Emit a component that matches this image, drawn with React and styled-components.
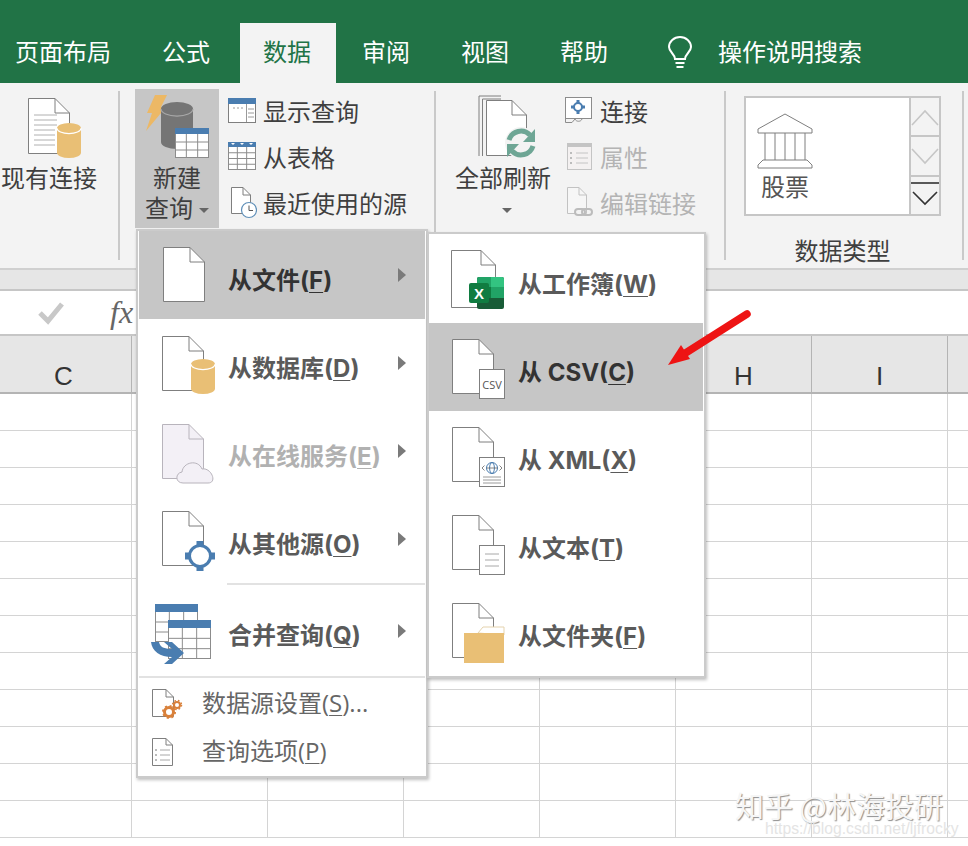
import React from 'react'
import styled, { createGlobalStyle } from 'styled-components'

const GlobalStyle = createGlobalStyle`
    html, body {
        margin: 0;
        padding: 0;
        background: #fff;
    }
    * {
        box-sizing: border-box;
    }
`;

const Page = styled.div`
    position: relative;
    width: 968px;
    height: 846px;
    overflow: hidden;
    font-family: "Open Sans", "Noto Sans CJK SC", sans-serif;
    color: #444;
`;

const TabBar = styled.div`
    display: flex;
    align-items: stretch;
    gap: 3px;
    height: 83px;
    padding: 23px 0 0 0;
    margin-left: -9px;
    background: #217346;
`;

const Tab = styled.div`
    display: flex;
    align-items: center;
    justify-content: center;
    padding: ${p => (p.$active ? '0 25px 6px 23px' : '0 24px 6px')};
    margin: ${p => (p.$active ? '0 -1px 0 3px' : '0')};
    font-size: 24px;
    color: ${p => (p.$active ? '#217346' : '#fff')};
    background: ${p => (p.$active ? '#f3f3f3' : 'transparent')};
`;

const SearchHint = styled.div`
    display: flex;
    align-items: center;
    gap: 24px;
    margin-left: 31px;
    padding-bottom: 6px;
    font-size: 24px;
    color: #fff;
    & svg {
        margin-top: 6px;
    }
`;

const Ribbon = styled.div`
    display: flex;
    align-items: flex-start;
    height: 185px;
    background: #f3f3f3;
`;

const RibbonGroup = styled.div`
    display: flex;
    flex: none;
    align-items: flex-start;
    width: ${p => p.$width}px;
    padding-left: ${p => p.$pad}px;
    gap: 8px;
`;

const Divider = styled.div`
    flex: none;
    width: 2px;
    height: 169px;
    margin-top: 8px;
    background: #c9c9c9;
`;

const LargeButton = styled.div`
    display: flex;
    flex-direction: column;
    align-items: center;
    width: ${p => p.$width}px;
    height: 139px;
    margin-top: 6px;
    padding-top: 2px;
    font-size: 24px;
    line-height: 30px;
    text-align: center;
    white-space: nowrap;
    color: #3f3f3f;
    background: ${p => (p.$pressed ? '#c6c6c6' : 'transparent')};
`;

const Caret = styled.span`
    display: inline-block;
    width: 0;
    height: 0;
    margin-left: ${p => p.$left || 0}px;
    vertical-align: middle;
    border-left: 5px solid transparent;
    border-right: 5px solid transparent;
    border-top: 5px solid #666;
`;

const SmallList = styled.div`
    display: flex;
    flex-direction: column;
    margin-top: 4px;
    margin-left: ${p => p.$left || 0}px;
`;

const SmallItem = styled.div`
    display: flex;
    align-items: center;
    gap: 6px;
    height: 46px;
    font-size: 24px;
    white-space: nowrap;
    color: ${p => (p.$disabled ? '#b4b4b4' : '#3f3f3f')};
`;

const TypeColumn = styled.div`
    display: flex;
    flex: none;
    flex-direction: column;
    align-items: center;
    width: 197px;
`;

const Gallery = styled.div`
    display: flex;
    width: 197px;
    height: 120px;
    margin-top: 13px;
    background: #fff;
    border: 2px solid #c6c6c6;
`;

const GalleryItem = styled.div`
    display: flex;
    flex: none;
    flex-direction: column;
    align-items: center;
    width: 163px;
    padding: 15px 85px 0 0;
    font-size: 24px;
    line-height: 30px;
    color: #555;
`;

const GalleryLabel = styled.span`
    margin-top: 3px;
`;

const GalleryScroll = styled.div`
    display: flex;
    flex-direction: column;
    flex: none;
    width: 30px;
    background: #f3f3f3;
    border-left: 2px solid #c6c6c6;
`;

const ScrollButton = styled.div`
    display: flex;
    align-items: center;
    justify-content: center;
    flex: 1;
    border-top: ${p => (p.$first ? '0' : '2px solid #c6c6c6')};
`;

const GroupLabel = styled.div`
    margin-top: 18px;
    font-size: 24px;
    line-height: 34px;
    color: #3f3f3f;
`;

const StatusBand = styled.div`
    height: 23px;
    background: #e6e6e6;
    border-top: 2px solid #d0d0d0;
    border-bottom: 2px solid #c6c6c6;
`;

const FormulaBar = styled.div`
    display: flex;
    align-items: center;
    height: 45px;
    padding-left: 36px;
    background: #fff;
    border-bottom: 2px solid #c6c6c6;
`;

const FxMark = styled.span`
    margin-left: 44px;
    font-family: "Liberation Serif", serif;
    font-style: italic;
    font-size: 32px;
    color: #666;
`;

const SheetGrid = styled.div`
    display: grid;
    grid-template-columns: repeat(8, 136px);
    margin-left: -4px;
    width: 1088px;
`;

const ColHead = styled.div`
    display: flex;
    align-items: flex-end;
    justify-content: center;
    height: 58px;
    padding-bottom: 0;
    font-size: 26px;
    font-family: "Liberation Sans", sans-serif;
    color: #333;
    background: #e6e6e6;
    border-right: 1px solid #b4b4b4;
    border-bottom: 2px solid #b4b4b4;
`;

const Cell = styled.div`
    height: 37px;
    border-right: 1px solid #d4d4d4;
    border-bottom: 1px solid #d4d4d4;
`;

const Menu = styled.div`
    position: absolute;
    left: 136px;
    top: 229px;
    width: 292px;
    height: 549px;
    padding: 0 1px;
    background: #fff;
    border: 2px solid #cbcbcb;
    box-shadow: 1px 2px 3px rgba(0, 0, 0, 0.25);
`;

const SubMenu = styled(Menu)`
    left: 427px;
    top: 232px;
    width: 279px;
    height: 446px;
    padding: 1px 1px 1px 0;
`;

const Row = styled.div`
    display: flex;
    align-items: center;
    height: ${p => p.$height || 88}px;
    padding: 0 19px 0 ${p => p.$pad || 9}px;
    font-family: "Inter", "Noto Sans CJK SC", sans-serif;
    font-size: 24px;
    font-weight: 700;
    white-space: nowrap;
    color: ${p => (p.$disabled ? '#b1b1b1' : p.$active ? '#333' : '#5a5a5a')};
    background: ${p => (p.$active ? '#c6c6c6' : 'transparent')};
`;

const RowLabel = styled.span`
    margin-left: ${p => p.$gap || 8}px;
    padding-top: 6px;
    flex: 1;
    & u {
        text-underline-offset: 3px;
        text-decoration-thickness: 1px;
    }
`;

const RowArrow = styled.span`
    flex: none;
    width: 0;
    height: 0;
    border-top: 7px solid transparent;
    border-bottom: 7px solid transparent;
    border-left: 8px solid #7a7a7a;
`;

const ShortRule = styled.div`
    height: 2px;
    margin-left: 88px;
    background: #e2e2e2;
`;

const FullRule = styled.div`
    height: 2px;
    margin-bottom: 2px;
    background: #e2e2e2;
`;

const PlainRow = styled.div`
    display: flex;
    align-items: center;
    gap: 18px;
    height: 48px;
    padding-left: 13px;
    font-size: 24px;
    white-space: nowrap;
    color: #666;
`;

const PlainLabel = styled.span`
    padding-bottom: 6px;
    & u {
        text-underline-offset: 3px;
        text-decoration-thickness: 1px;
    }
`;

const RedArrow = styled.svg`
    position: absolute;
    left: 660px;
    top: 300px;
`;

const Watermark = styled.div`
    position: absolute;
    left: 735px;
    top: 791px;
    font-family: "Noto Sans CJK SC", sans-serif;
    font-size: 29px;
    line-height: 29px;
    white-space: nowrap;
    color: #f6f6f6;
    text-shadow: 1px 1px 1px #8f8f8f;
`;

const WatermarkUrl = styled.div`
    position: absolute;
    left: 765px;
    top: 820px;
    font-family: "Liberation Sans", sans-serif;
    font-size: 15.7px;
    line-height: 17px;
    white-space: nowrap;
    color: #e4e4e4;
`;

const Svg = styled.svg`
    flex: none;
    display: block;
`;

const BLUE = '#4a7db0';
const AMBER = '#e9bf75';
const LINE = '#7f7f7f';

const Doc = ({ x = 15, y = 8, w = 42, h = 55, fold = 15, fill = '#fff', stroke = LINE }) => (
    <>
        <path
            d={`M${x + .5} ${y + .5}H${x + w - fold}L${x + w - .5} ${y + fold}V${y + h - .5}H${x + .5}Z`}
            fill={fill}
            stroke={stroke}
        />
        <path d={`M${x + w - fold} ${y + .5}V${y + fold}H${x + w - .5}`} fill="none" stroke={stroke} />
    </>
);

const Cylinder = ({ x, y, w, h, fill = AMBER, rim = '#fff' }) => {
    const ry = w * 0.22;
    return (
        <>
            <path d={`M${x} ${y + ry}V${y + h - ry}A${w / 2} ${ry} 0 0 0 ${x + w} ${y + h - ry}V${y + ry}A${w / 2} ${ry} 0 0 0 ${x} ${y + ry}Z`} fill={fill} />
            <path d={`M${x} ${y + ry}A${w / 2} ${ry} 0 0 0 ${x + w} ${y + ry}`} fill="none" stroke={rim} strokeWidth="1.2" />
        </>
    );
};

const SheetTable = ({ x, y, w, h, head = 7, cols = 3, rows = 3, color = BLUE, stroke = '#8c8c8c' }) => {
    const lines = [];
    for (let i = 1; i < cols; i++) {
        lines.push(`M${x + (w * i) / cols} ${y + head}V${y + h}`);
    }
    for (let i = 1; i < rows; i++) {
        lines.push(`M${x} ${y + head + ((h - head) * i) / rows}H${x + w}`);
    }
    return (
        <>
            <rect x={x + .5} y={y + .5} width={w - 1} height={h - 1} fill="#fff" stroke={stroke} />
            <path d={lines.join('')} stroke={stroke} strokeWidth="1" fill="none" />
            <rect x={x} y={y} width={w} height={head} fill={color} />
        </>
    );
};

const Icon72 = ({ children }) => (
    <Svg width="72" height="72" viewBox="0 0 72 72">{children}</Svg>
);

const ExistingIcon = () => (
    <Icon72>
        <Doc y={7} h={56} />
        <path d="M21 24H44M21 29H44M21 34H44M21 39H42M21 44H42M21 49H42M21 54H42" stroke="#b0b0b0" />
        <Cylinder x={44} y={32} w={24} h={35} />
    </Icon72>
);

const NewQueryIcon = () => (
    <Icon72>
        <path d="M14 4H26L20 16H25L5 40L11 22H6Z" fill="#ecb865" />
        <Cylinder x={20} y={11} w={32} h={47} fill="#757575" rim="#a8a8a8" />
        <SheetTable x={34} y={37} w={34} h={30} head={6} />
    </Icon72>
);

const RefreshIcon = () => (
    <Icon72>
        <path d="M12 65V5H34M15.5 65V8H34" fill="none" stroke={LINE} />
        <Doc x={19} y={9} w={41} h={56} />
        <circle cx="54" cy="52" r="16" fill="#f3f3f3" />
        <path d="M42 49A12.5 12.5 0 0 1 63 44" fill="none" stroke="#6ea695" strokeWidth="5" />
        <path d="M66 55A12.5 12.5 0 0 1 45 60" fill="none" stroke="#6ea695" strokeWidth="5" />
        <path d="M68 38V51H56Z" fill="#6ea695" />
        <path d="M40 66V53H52Z" fill="#6ea695" />
    </Icon72>
);

const ShowQueryIcon = () => (
    <Svg width="30" height="30" viewBox="0 0 30 30">
        <rect x="1.5" y="3.5" width="27" height="24" fill="#fff" stroke={LINE} />
        <rect x="1" y="3" width="28" height="6" fill={BLUE} />
        <path d="M19.5 9V27M21 14H27M21 18H27M21 22H27" stroke="#9a9a9a" />
        <path d="M6 13H18" stroke="#9a9a9a" strokeDasharray="2 2" />
    </Svg>
);

const FromTableIcon = () => (
    <Svg width="30" height="30" viewBox="0 0 30 30">
        <SheetTable x={1} y={1} w={28} h={28} head={5} rows={4} />
        <path d="M4 2H8L6 4ZM13 2H17L15 4ZM22 2H26L24 4Z" fill="#fff" />
    </Svg>
);

const RecentIcon = () => (
    <Svg width="30" height="34" viewBox="0 0 30 34">
        <Doc x={4} y={2} w={20} h={27} fold={8} />
        <circle cx="22" cy="25" r="7.5" fill="#fff" stroke="#5f8fb8" strokeWidth="1.2" />
        <path d="M22 20.5V25.5H26" fill="none" stroke="#555" />
    </Svg>
);

const ConnectIcon = () => (
    <Svg width="30" height="30" viewBox="0 0 30 30">
        <rect x="1.5" y="2.5" width="26" height="21" fill="#fff" stroke="#8c8c8c" />
        <path d="M1.5 23.5V27.5H8L11 24M11 24C12 27 17 27 18 24" fill="none" stroke="#8c8c8c" />
        <circle cx="14" cy="12" r="4" fill="#fff" stroke={BLUE} strokeWidth="2" />
        <path d="M14 5V8M14 16V19M7 12H10M18 12H21" stroke={BLUE} strokeWidth="3" />
    </Svg>
);

const PropsIcon = () => (
    <Svg width="30" height="30" viewBox="0 0 30 30">
        <rect x="3.5" y="2.5" width="24" height="26" fill="#f4f1f1" stroke="#c4c4c4" />
        <rect x="3" y="2" width="25" height="4" fill="#c4c4c4" />
        <path d="M12 12H24M12 17H24M12 22H24" stroke="#c4c4c4" />
        <path d="M6 12H9M6 17H9M6 22H9" stroke="#bcbcbc" strokeWidth="2" strokeDasharray="2 1" />
    </Svg>
);

const EditLinkIcon = () => (
    <Svg width="30" height="34" viewBox="0 0 30 34">
        <Doc x={3} y={2} w={20} h={27} fold={8} fill="#f6f6f6" stroke="#c2c2c2" />
        <rect x="11" y="24" width="10" height="6" rx="3" fill="#f3f3f3" stroke="#bcbcbc" strokeWidth="2" />
        <rect x="18" y="24" width="10" height="6" rx="3" fill="none" stroke="#bcbcbc" strokeWidth="2" />
    </Svg>
);

const BankIcon = () => (
    <Svg width="56" height="56" viewBox="0 0 56 56">
        <path d="M1 16L28 1L55 16V20H1Z" fill="#fff" stroke={LINE} />
        <path d="M8 20V47M18 20V47M28 20V47M38 20V47M48 20V47" stroke={LINE} />
        <path d="M6 47H50L55 52V55H1V52Z" fill="#fff" stroke={LINE} />
    </Svg>
);

const Chevron = ({ up, color }) => (
    <Svg width="28" height="18" viewBox="0 0 28 18">
        <path d={up ? 'M1 17L14 3L27 17' : 'M1 2L14 16L27 2'} fill="none" stroke={color} strokeWidth="1.6" />
    </Svg>
);

const MoreChevron = () => (
    <Svg width="28" height="28" viewBox="0 0 28 28">
        <path d="M0 2H28" stroke="#333" strokeWidth="1.6" />
        <path d="M2 11L14 23L26 11" fill="none" stroke="#333" strokeWidth="1.6" />
    </Svg>
);

const BulbIcon = () => (
    <Svg width="28" height="34" viewBox="0 0 28 34">
        <path d="M9 23C9 18 3 16 3 11A11 10 0 0 1 25 11C25 16 19 18 19 23Z" fill="none" stroke="#fff" strokeWidth="2" />
        <path d="M9.5 27H18.5M10.5 31H17.5" stroke="#fff" strokeWidth="2" />
    </Svg>
);

const FileIcon = () => (
    <Icon72><Doc x={15} y={8} /></Icon72>
);

const DatabaseFileIcon = () => (
    <Icon72>
        <Doc x={14} y={9} />
        <Cylinder x={43} y={32} w={24} h={35} />
    </Icon72>
);

const CloudFileIcon = () => (
    <Icon72>
        <Doc x={14} y={9} fill="#f3f0f6" stroke="#b8b4bc" />
        <path d="M35 68C27 68 27 58 34 57C35 47 50 44 54 54C63 52 70 68 60 68Z" fill="#f3f0f6" stroke="#b8b4bc" />
    </Icon72>
);

const OtherFileIcon = () => (
    <Icon72>
        <Doc x={14} y={8} />
        <circle cx="52" cy="53" r="10.5" fill="#fff" stroke={BLUE} strokeWidth="3" />
        <path d="M52 38V44M52 62V68M37 53H43M61 53H67" stroke={BLUE} strokeWidth="7" />
    </Icon72>
);

const MergeIcon = () => (
    <Icon72>
        <SheetTable x={7} y={9} w={43} h={38} head={8} />
        <SheetTable x={20} y={25} w={43} h={39} head={8} />
        <path d="M3 47H11C12 52 16 54 24 54L16 47H24L36 58L24 69H16L24 62C12 62 4 56 3 47Z" fill={BLUE} />
    </Icon72>
);

const SettingsIcon = () => (
    <Svg width="32" height="34" viewBox="0 0 32 34">
        <Doc x={0} y={2} w={22} h={28} fold={8} />
        <circle cx="17" cy="25" r="4.5" fill="#fff" stroke="#d9803a" strokeWidth="3" />
        <circle cx="17" cy="25" r="6" fill="none" stroke="#d9803a" strokeWidth="2" strokeDasharray="2 2.7" />
        <circle cx="25" cy="18" r="3" fill="#fff" stroke="#d9803a" strokeWidth="2" />
        <circle cx="25" cy="18" r="4.5" fill="none" stroke="#d9803a" strokeWidth="1.5" strokeDasharray="1.6 2" />
    </Svg>
);

const OptionsIcon = () => (
    <Svg width="32" height="34" viewBox="0 0 32 34">
        <Doc x={0} y={3} w={21} h={28} fold={7} />
        <path d="M8 15H18M8 20H18M8 25H18" stroke="#a8a8a8" />
        <path d="M3 15H6M3 20H6M3 25H6" stroke="#777" strokeDasharray="2 1" />
    </Svg>
);

const ExcelFileIcon = () => (
    <Icon72>
        <Doc x={7} y={7} w={45} h={58} />
        <rect x="33" y="34" width="27" height="32" rx="2" fill="#185c37" />
        <path d="M33 36A2 2 0 0 1 35 34H47V44H33Z" fill="#21a366" />
        <path d="M47 34H58A2 2 0 0 1 60 36V44H47Z" fill="#33c481" />
        <rect x="33" y="44" width="14" height="11" fill="#107c41" />
        <rect x="47" y="44" width="13" height="11" fill="#21a366" />
        <rect x="25" y="40" width="20" height="20" rx="2" fill="#107c41" />
        <text x="35" y="55.5" textAnchor="middle" fontFamily="Liberation Sans" fontWeight="700" fontSize="15" fill="#fff">X</text>
    </Icon72>
);

const SmallSheet = ({ children }) => (
    <>
        <rect x="35.5" y="38.5" width="25" height="29" fill="#fff" stroke={LINE} />
        {children}
    </>
);

const CsvFileIcon = () => (
    <Icon72>
        <Doc x={8} y={8} />
        <SmallSheet>
            <text x="48" y="58" textAnchor="middle" fontFamily="Open Sans" fontWeight="400" fontSize="11" fill="#555">CSV</text>
        </SmallSheet>
    </Icon72>
);

const XmlFileIcon = () => (
    <Icon72>
        <Doc x={8} y={8} />
        <SmallSheet>
            <circle cx="48" cy="49" r="5.5" fill="none" stroke="#4a7db0" />
            <ellipse cx="48" cy="49" rx="2.4" ry="5.5" fill="none" stroke="#4a7db0" />
            <path d="M42.5 49H53.5M40.5 46.5L38 49L40.5 51.5M55.5 46.5L58 49L55.5 51.5" fill="none" stroke="#666" strokeWidth=".8" />
            <path d="M39 58H57M39 61H57M39 64H57" stroke="#9a9a9a" />
        </SmallSheet>
    </Icon72>
);

const TextFileIcon = () => (
    <Icon72>
        <Doc x={8} y={8} />
        <SmallSheet>
            <path d="M41 47H55M41 53H55M41 59H55" stroke="#a8a8a8" />
        </SmallSheet>
    </Icon72>
);

const FolderFileIcon = () => (
    <Icon72>
        <Doc x={8} y={8} />
        <path d="M34 38L39 32H60V40Z" fill="#fff" stroke="#e5d3ae" />
        <path d="M20 38H60V68H20Z" fill={AMBER} />
    </Icon72>
);

const tabs = ['页面布局', '公式', '数据', '审阅', '视图', '帮助'];
const headers = ['C', '', '', '', '', 'H', 'I', ''];
const ROWS = 12;

const mainItems = [
    { icon: <FileIcon />, label: '从文件(', key: 'F', active: true },
    { icon: <DatabaseFileIcon />, label: '从数据库(', key: 'D' },
    { icon: <CloudFileIcon />, label: '从在线服务(', key: 'E', disabled: true },
    { icon: <OtherFileIcon />, label: '从其他源(', key: 'O' },
];

const subItems = [
    { icon: <ExcelFileIcon />, label: '从工作簿(', key: 'W' },
    { icon: <CsvFileIcon />, label: '从 CSV(', key: 'C', active: true },
    { icon: <XmlFileIcon />, label: '从 XML(', key: 'X' },
    { icon: <TextFileIcon />, label: '从文本(', key: 'T' },
    { icon: <FolderFileIcon />, label: '从文件夹(', key: 'F' },
];

const App = () => {
    return (
        <Page>
            <GlobalStyle />
            <TabBar>
                {tabs.map(t => <Tab key={t} $active={t === '数据'}>{t}</Tab>)}
                <SearchHint><BulbIcon />操作说明搜索</SearchHint>
            </TabBar>

            <Ribbon>
                <RibbonGroup $width={118} $pad={1}>
                    <LargeButton $width={96}><ExistingIcon />现有连接</LargeButton>
                </RibbonGroup>
                <Divider />
                <RibbonGroup $width={314} $pad={15}>
                    <LargeButton $width={84} $pressed>
                        <NewQueryIcon />
                        新建
                        <span>查询<Caret $left={6} /></span>
                    </LargeButton>
                    <SmallList>
                        <SmallItem><ShowQueryIcon />显示查询</SmallItem>
                        <SmallItem><FromTableIcon />从表格</SmallItem>
                        <SmallItem><RecentIcon />最近使用的源</SmallItem>
                    </SmallList>
                </RibbonGroup>
                <Divider />
                <RibbonGroup $width={288} $pad={19}>
                    <LargeButton $width={96}>
                        <RefreshIcon />
                        全部刷新
                        <span><Caret $left={8} /></span>
                    </LargeButton>
                    <SmallList $left={5}>
                        <SmallItem><ConnectIcon />连接</SmallItem>
                        <SmallItem $disabled><PropsIcon />属性</SmallItem>
                        <SmallItem $disabled><EditLinkIcon />编辑链接</SmallItem>
                    </SmallList>
                </RibbonGroup>
                <Divider />
                <RibbonGroup $width={236} $pad={18}>
                    <TypeColumn>
                        <Gallery>
                            <GalleryItem>
                                <BankIcon />
                                <GalleryLabel>股票</GalleryLabel>
                            </GalleryItem>
                            <GalleryScroll>
                                <ScrollButton $first><Chevron up color="#c6c6c6" /></ScrollButton>
                                <ScrollButton><Chevron color="#c6c6c6" /></ScrollButton>
                                <ScrollButton><MoreChevron /></ScrollButton>
                            </GalleryScroll>
                        </Gallery>
                        <GroupLabel>数据类型</GroupLabel>
                    </TypeColumn>
                </RibbonGroup>
                <Divider />
            </Ribbon>

            <StatusBand />

            <FormulaBar>
                <Svg width="30" height="26" viewBox="0 0 30 26">
                    <path d="M4 13L12 21L26 4" fill="none" stroke="#c8c8c8" strokeWidth="5" />
                </Svg>
                <FxMark>fx</FxMark>
            </FormulaBar>

            <SheetGrid>
                {headers.map((h, i) => <ColHead key={i}>{h}</ColHead>)}
                {Array.from({ length: ROWS * 8 }, (_, i) => <Cell key={i} />)}
            </SheetGrid>

            <Menu>
                {mainItems.map(it => (
                    <Row key={it.label} $active={it.active} $disabled={it.disabled}>
                        {it.icon}
                        <RowLabel>{it.label}<u>{it.key}</u>)</RowLabel>
                        <RowArrow />
                    </Row>
                ))}
                <ShortRule />
                <Row $height={91}>
                    <MergeIcon />
                    <RowLabel>合并查询(<u>Q</u>)</RowLabel>
                    <RowArrow />
                </Row>
                <FullRule />
                <PlainRow><SettingsIcon /><PlainLabel>数据源设置(<u>S</u>)...</PlainLabel></PlainRow>
                <PlainRow><OptionsIcon /><PlainLabel>查询选项(<u>P</u>)</PlainLabel></PlainRow>
            </Menu>

            <SubMenu>
                {subItems.map(it => (
                    <Row key={it.label} $active={it.active} $pad={15}>
                        {it.icon}
                        <RowLabel $gap={2}>{it.label}<u>{it.key}</u>)</RowLabel>
                    </Row>
                ))}
            </SubMenu>

            <RedArrow width="100" height="75" viewBox="0 0 100 75">
                <path d="M87 14L24 54" stroke="#ee1414" strokeWidth="7.5" strokeLinecap="round" />
                <path d="M8 65L21 45L30 59Z" fill="#ee1414" />
            </RedArrow>

            <Watermark>知乎 @林海投研</Watermark>
            <WatermarkUrl>https://blog.csdn.net/ljfrocky</WatermarkUrl>
        </Page>
    )
}

export default App
